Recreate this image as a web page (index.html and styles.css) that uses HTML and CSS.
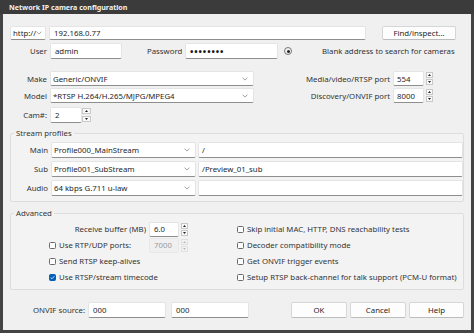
FILE: index.html
```html
<!DOCTYPE html>
<html>
<head>
<meta charset="utf-8">
<title>Network IP camera configuration</title>
<link rel="stylesheet" href="styles.css">
</head>
<body>
<div class="window">
  <div class="titlebar">Network IP camera configuration</div>
  <div class="content">
    <div class="row r1">
      <div class="field select w-proto"><span class="val">http://</span><svg class="chev" width="6" height="4" viewBox="0 0 6 4"><path d="M0.5 0.6 L3 3.1 L5.5 0.6" fill="none" stroke="#8a8a8a" stroke-width="0.8"/></svg></div>
      <div class="field input w-ip">192.168.0.77</div>
      <div class="button w-find">Find/inspect...</div>
    </div>

    <div class="row r2">
      <span class="lbl w-lbl">User</span>
      <div class="field input w-user">admin</div>
      <span class="lbl w-pwlbl">Password</span>
      <div class="field input w-pw"><span class="dots">••••••••</span></div>
      <span class="radio"><span class="radio-dot"></span></span>
      <span class="hint">Blank address to search for cameras</span>
    </div>

    <div class="row r-make">
      <span class="lbl w-lbl">Make</span>
      <div class="field select w-make"><span class="val">Generic/ONVIF</span><svg class="chev" width="6" height="4" viewBox="0 0 6 4"><path d="M0.5 0.6 L3 3.1 L5.5 0.6" fill="none" stroke="#8a8a8a" stroke-width="0.8"/></svg></div>
      <div class="port">
        <span class="lbl">Media/video/RTSP port</span>
        <div class="field input w-port">554</div>
        <div class="spin"><span class="sb"><svg width="3" height="2" viewBox="0 0 3 2"><path d="M0 2 L1.5 0 L3 2Z" fill="#222"/></svg></span><span class="sb"><svg width="3" height="2" viewBox="0 0 3 2"><path d="M0 0 L1.5 2 L3 0Z" fill="#222"/></svg></span></div>
      </div>
    </div>

    <div class="row r-model">
      <span class="lbl w-lbl">Model</span>
      <div class="field select w-make"><span class="val">*RTSP H.264/H.265/MJPG/MPEG4</span><svg class="chev" width="6" height="4" viewBox="0 0 6 4"><path d="M0.5 0.6 L3 3.1 L5.5 0.6" fill="none" stroke="#8a8a8a" stroke-width="0.8"/></svg></div>
      <div class="port">
        <span class="lbl">Discovery/ONVIF port</span>
        <div class="field input w-port">8000</div>
        <div class="spin"><span class="sb"><svg width="3" height="2" viewBox="0 0 3 2"><path d="M0 2 L1.5 0 L3 2Z" fill="#222"/></svg></span><span class="sb"><svg width="3" height="2" viewBox="0 0 3 2"><path d="M0 0 L1.5 2 L3 0Z" fill="#222"/></svg></span></div>
      </div>
    </div>

    <div class="row r-cam">
      <span class="lbl w-lbl">Cam#:</span>
      <div class="field input w-cam">2</div>
      <div class="spin spin-cam"><span class="sb"><svg width="3" height="2" viewBox="0 0 3 2"><path d="M0 2 L1.5 0 L3 2Z" fill="#222"/></svg></span><span class="sb"><svg width="3" height="2" viewBox="0 0 3 2"><path d="M0 0 L1.5 2 L3 0Z" fill="#222"/></svg></span></div>
    </div>

    <fieldset class="group g-stream">
      <legend>Stream profiles</legend>
      <div class="grow">
        <span class="lbl w-lbl">Main</span>
        <div class="field select w-prof"><span class="val">Profile000_MainStream</span><svg class="chev" width="6" height="4" viewBox="0 0 6 4"><path d="M0.5 0.6 L3 3.1 L5.5 0.6" fill="none" stroke="#8a8a8a" stroke-width="0.8"/></svg></div>
        <div class="field input w-path">/</div>
      </div>
      <div class="grow">
        <span class="lbl w-lbl">Sub</span>
        <div class="field select w-prof"><span class="val">Profile001_SubStream</span><svg class="chev" width="6" height="4" viewBox="0 0 6 4"><path d="M0.5 0.6 L3 3.1 L5.5 0.6" fill="none" stroke="#8a8a8a" stroke-width="0.8"/></svg></div>
        <div class="field input w-path">/Preview_01_sub</div>
      </div>
      <div class="grow">
        <span class="lbl w-lbl">Audio</span>
        <div class="field select w-prof"><span class="val">64 kbps G.711 u-law</span><svg class="chev" width="6" height="4" viewBox="0 0 6 4"><path d="M0.5 0.6 L3 3.1 L5.5 0.6" fill="none" stroke="#8a8a8a" stroke-width="0.8"/></svg></div>
        <div class="field input w-path"></div>
      </div>
    </fieldset>

    <fieldset class="group g-adv">
      <legend>Advanced</legend>
      <div class="adv">
        <div class="acol">
          <div class="arow">
            <span class="lbl w-buflbl">Receive buffer (MB)</span>
            <div class="field input w-buf">6.0</div>
            <div class="spin"><span class="sb"><svg width="3" height="2" viewBox="0 0 3 2"><path d="M0 2 L1.5 0 L3 2Z" fill="#222"/></svg></span><span class="sb"><svg width="3" height="2" viewBox="0 0 3 2"><path d="M0 0 L1.5 2 L3 0Z" fill="#222"/></svg></span></div>
          </div>
          <div class="arow">
            <label class="check w-rtp"><span class="cb"></span>Use RTP/UDP ports:</label>
            <div class="field input w-buf disabled">7000</div>
            <div class="spin disabled"><span class="sb"><svg width="3" height="2" viewBox="0 0 3 2"><path d="M0 2 L1.5 0 L3 2Z" fill="#bbb"/></svg></span><span class="sb"><svg width="3" height="2" viewBox="0 0 3 2"><path d="M0 0 L1.5 2 L3 0Z" fill="#bbb"/></svg></span></div>
          </div>
          <div class="arow">
            <label class="check pad-left"><span class="cb"></span>Send RTSP keep-alives</label>
          </div>
          <div class="arow">
            <label class="check pad-left"><span class="cb on"><svg width="6" height="5" viewBox="0 0 6 5"><path d="M0.8 2.6 L2.3 4 L5.2 1" fill="none" stroke="#fff" stroke-width="1"/></svg></span>Use RTSP/stream timecode</label>
          </div>
        </div>
        <div class="acol">
          <div class="arow"><label class="check"><span class="cb"></span>Skip initial MAC, HTTP, DNS reachability tests</label></div>
          <div class="arow"><label class="check"><span class="cb"></span>Decoder compatibility mode</label></div>
          <div class="arow"><label class="check"><span class="cb"></span>Get ONVIF trigger events</label></div>
          <div class="arow"><label class="check"><span class="cb"></span>Setup RTSP back-channel for talk support (PCM-U format)</label></div>
        </div>
      </div>
    </fieldset>

    <div class="row r-bottom">
      <span class="lbl w-onvlbl">ONVIF source:</span>
      <div class="field input w-onv">000</div>
      <div class="field input w-onv">000</div>
      <div class="buttons">
        <div class="button w-btn">OK</div>
        <div class="button w-btn">Cancel</div>
        <div class="button w-btn2">Help</div>
      </div>
    </div>
  </div>
</div>
</body>
</html>
```

FILE: styles.css
```css
* { box-sizing: border-box; }
html, body { margin: 0; padding: 0; }
body {
  width: 474px;
  height: 333px;
  overflow: hidden;
  background: #454545;
  font-family: "Noto Sans", "Open Sans", sans-serif;
  font-size: 7.8px;
  color: #262626;
}
.window {
  width: 474px;
  height: 333px;
  background: #444444;
  padding: 0 3px 3px 3px;
  display: flex;
  flex-direction: column;
}
.titlebar {
  height: 14px;
  flex: none;
  background: #3b3b3b;
  margin: 0 -3px;
  padding-left: 9px;
  color: #f2f2f2;
  font-weight: bold;
  font-size: 7.1px;
  line-height: 14px;
}
.content {
  flex: 1;
  background: #f0f0f0;
  padding: 0 7px 0 7px;
  display: flex;
  flex-direction: column;
}
.row { display: flex; align-items: center; flex: none; }
.lbl { white-space: nowrap; color: #333333; }
.w-lbl { width: 37px; text-align: right; margin-right: 3px; flex: none; }

.field {
  background: #ffffff;
  border: 1px solid #e4e4e4;
  border-bottom-color: #8e8e8e;
  border-radius: 2px;
  height: 15px;
  display: flex;
  align-items: center;
  padding-left: 3px;
  white-space: nowrap;
  overflow: hidden;
  flex: none;
}
.select { justify-content: space-between; padding-right: 5px; padding-left: 2px; }
.select .chev { flex: none; }
.button {
  background: #fdfdfd;
  border: 1px solid #d6d6d6;
  border-bottom-color: #bcbcbc;
  border-radius: 2px;
  height: 15px;
  display: flex;
  align-items: center;
  justify-content: center;
  flex: none;
  color: #262626;
}

/* row 1 */
.r1 { margin-top: 11px; height: 15px; }
.w-proto { width: 36px; margin-right: 3px; height: 14px; }
.w-ip { width: 317px; height: 14px; padding-left: 4px; }
.w-find { width: 74px; margin-left: 16px; height: 14px; }

/* row 2 */
.r2 { margin-top: 3px; height: 16px; }
.w-user { width: 72px; height: 16px; padding-left: 4px; }
.w-pwlbl { margin-left: 25px; width: 38px; margin-right: 0; }
.w-pw { width: 93px; height: 16px; padding-left: 4px; }
.dots { font-size: 9px; letter-spacing: 0.9px; font-weight: bold; color: #111; }
.radio {
  width: 8px; height: 8px; border-radius: 50%;
  border: 1px solid #777;
  margin-left: 6px;
  display: flex; align-items: center; justify-content: center;
  flex: none;
}
.radio-dot { width: 3px; height: 3px; border-radius: 50%; background: #222; }
.hint { margin-left: 30px; white-space: nowrap; color: #333333; }

/* make / model */
.r-make { margin-top: 12px; height: 15px; }
.r-model { margin-top: 2px; height: 15px; }
.w-make { width: 204px; }
.port { margin-left: auto; margin-right: 31px; display: flex; align-items: center; }
.port .lbl { margin-right: 3px; }
.w-port { width: 31px; margin-right: 2px; padding-left: 3px; }

.spin {
  width: 7px; height: 15px;
  display: flex; flex-direction: column; justify-content: space-between;
  flex: none;
  padding: 1px 0;
}
.sb {
  height: 6px;
  background: #fafafa;
  border: 1px solid #c8c8c8;
  display: flex; align-items: center; justify-content: center;
}
.spin.disabled .sb { border-color: #e0e0e0; background: #f3f3f3; }

/* cam */
.r-cam { margin-top: 3px; height: 17px; }
.w-cam { width: 32px; height: 16px; padding-left: 4px; }
.spin-cam { width: 9px; height: 16px; }

/* groups */
.group {
  margin: 0;
  padding: 0;
  border: 1px solid #dddddd;
  border-radius: 2px;
  background: #f3f3f3;
  width: 454px;
  flex: none;
}
.group legend {
  padding: 0 2px;
  margin-left: 3px;
  line-height: 11px;
  height: 11px;
  color: #333333;
}
.g-stream { margin-top: 5px; height: 74px; padding-top: 3px; }
.grow { display: flex; align-items: center; height: 16px; margin-bottom: 3px; }
.w-prof { width: 145px; height: 16px; margin-right: 2px; }
.w-path { width: 265px; height: 16px; padding-left: 3px; }

.g-adv { margin-top: 6px; height: 82px; padding-top: 2px; }
.adv { display: flex; }
.acol { display: flex; flex-direction: column; }
.acol:first-child { width: 226px; }
.arow { height: 16px; display: flex; align-items: center; }
.w-buflbl { width: 135px; text-align: right; margin-right: 3px; }
.w-buf { width: 30px; height: 15px; margin-right: 2px; padding-left: 4px; }
.w-buf.disabled { background: #f0f0f0; border-color: #e8e8e8; color: #9a9a9a; }
.check { display: flex; align-items: center; white-space: nowrap; color: #333333; }
.w-rtp { width: 138px; padding-left: 38px; }
.pad-left { padding-left: 38px; }
.cb {
  width: 7px; height: 7px;
  border: 1px solid #6a6a6a;
  border-radius: 1.5px;
  background: #fdfdfd;
  margin-right: 3px;
  flex: none;
  display: flex; align-items: center; justify-content: center;
}
.cb.on { background: #005fb8; border-color: #005fb8; }

/* bottom */
.r-bottom { margin-top: 12px; height: 16px; }
.w-onvlbl { width: 75px; text-align: right; margin-right: 3px; }
.w-onv { width: 78px; height: 16px; margin-right: 5px; padding-left: 4px; }
.buttons { margin-left: auto; display: flex; gap: 3px; }
.w-btn { width: 56px; height: 16px; }
.w-btn2 { width: 55px; height: 16px; }
```
